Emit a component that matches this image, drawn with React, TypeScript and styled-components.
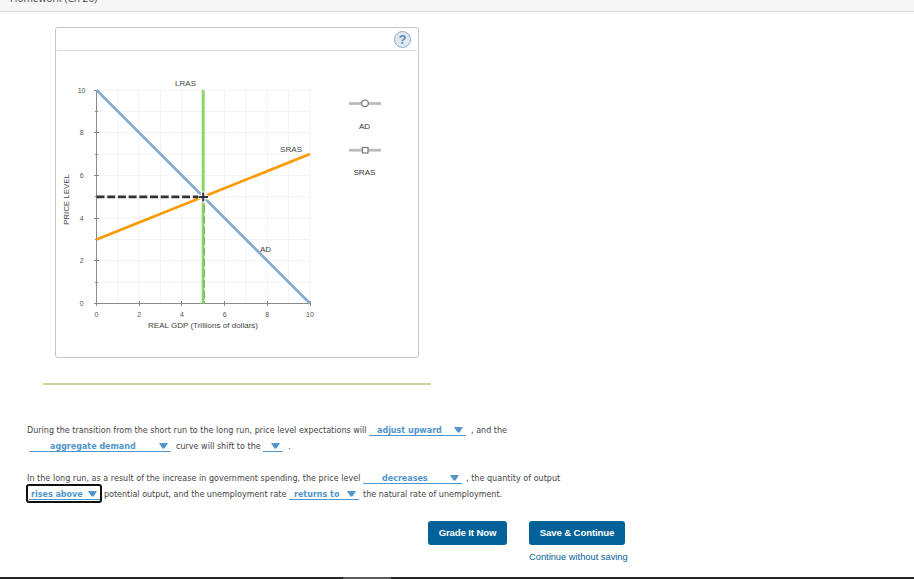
import React from "react";
import styled, { createGlobalStyle } from "styled-components";

const GlobalStyle = createGlobalStyle`
  * { box-sizing: border-box; }
  html, body { margin: 0; padding: 0; background: #fff; overflow: hidden; }
`;

const Page = styled.div`
  display: flex;
  flex-direction: column;
  width: 914px;
  height: 579px;
  overflow: hidden;
  font-family: "Liberation Sans", Arial, sans-serif;
`;

const Header = styled.header`
  display: flex;
  align-items: flex-end;
  flex: none;
  height: 12px;
  padding: 0 0 6px 10px;
  overflow: hidden;
  background: #f6f6f6;
  border-bottom: 1px solid #dcdcdc;
  color: #444;
  font: 10.1px/14px "Open Sans", sans-serif;
  white-space: nowrap;
`;

const Main = styled.main`
  display: flex;
  flex-direction: column;
  align-items: flex-start;
  flex: 1;
  padding-top: 15px;
`;

const GraphCard = styled.section`
  width: 364px;
  height: 331px;
  margin-left: 55px;
  border: 1px solid #c6c6c6;
  border-radius: 3px;
`;

const CardHeader = styled.div`
  display: flex;
  justify-content: flex-end;
  height: 23px;
  margin: 0 1px;
  padding: 3px 6px 0 0;
  border-bottom: 1px solid #dadada;
`;

const HelpButton = styled.button`
  display: flex;
  align-items: center;
  justify-content: center;
  width: 17px;
  height: 17px;
  padding: 0;
  border: 1px solid #8aaccd;
  border-radius: 50%;
  background: #dfe7ef;
  color: #5e8db8;
  font: bold 13px/15px "Liberation Sans", sans-serif;
`;

const CardBody = styled.div`
  display: flex;
`;

const Chart = styled.svg`
  display: block;
  width: 274px;
  height: 300px;
  flex: none;
  font-family: "Liberation Sans", Arial, sans-serif;
`;

const Legend = styled.div`
  display: flex;
  flex-direction: column;
  gap: 13px;
  padding: 48px 0 0 17.5px;
`;

const LegendItem = styled.div`
  display: flex;
  flex-direction: column;
  align-items: center;
  gap: 15px;
  width: 34px;
  height: 34px;
  color: #333;
  font-size: 8.1px;
  line-height: 10px;

  & + & {
    gap: 14px;
  }
`;

const Divider = styled.hr`
  width: 388px;
  height: 2px;
  margin: 25px 0 0 43px;
  border: 0;
  background: #d8cf9f;
`;

const Question = styled.div`
  display: flex;
  flex-direction: column;
  gap: 16px;
  margin: 37px 0 0 27px;
  color: #444;
  font: 8px/16px "DejaVu Sans", Verdana, sans-serif;
`;

const Line = styled.div`
  display: flex;
  height: 16px;
  white-space: pre;
`;

const Phrase = styled.span<{ $w: number; $ls?: number }>`
  width: ${(p) => p.$w}px;
  flex: none;
  line-height: 18px;
  letter-spacing: ${(p) => p.$ls ?? 0}px;
`;

const Select = styled.span<{ $w: number; $pad: number }>`
  display: flex;
  width: ${(p) => p.$w}px;
  height: 13px;
  flex: none;
  margin-top: 1px;
  padding: 0 3px 0 ${(p) => p.$pad}px;
  border-bottom: 1px solid #5195cb;
  color: #5195cb;
  font-weight: bold;
  line-height: 16px;
  svg { flex: none; margin: 4px 0 0 auto; }
`;

const FocusRing = styled.span`
  flex: none;
  width: 76px;
  height: 19px;
  margin: -2px 2px 0 -1px;
  padding: 1px 0 0 1px;
  border: 2px solid #101010;
  border-radius: 3px;
  > span { margin-top: 0; }
`;

const Actions = styled.div`
  display: flex;
  align-items: flex-start;
  gap: 22px;
  margin: 19px 0 0 428px;
`;

const ActionColumn = styled.div`
  display: flex;
  flex-direction: column;
  gap: 6px;
`;

const Button = styled.button<{ $w: number }>`
  width: ${(p) => p.$w}px;
  height: 24px;
  padding: 0;
  border: 0;
  border-radius: 3px;
  background: #006298;
  color: #fff;
  font: bold 9.6px/24px "Liberation Sans", Arial, sans-serif;
  letter-spacing: -0.12px;
  white-space: nowrap;
`;

const SkipLink = styled.a`
  color: #006298;
  font-size: 9.3px;
  line-height: 12px;
  white-space: nowrap;
`;

const BottomBar = styled.footer`
  flex: none;
  height: 2px;
  padding-left: 343px;
  background: #27272a;
`;

const BottomTab = styled.div`
  width: 48px;
  height: 2px;
  background: #5a5a5c;
`;

// Plot coordinates: one unit of either axis is 21.35px.
const UNIT = 21.35;
const px = (v: number) => 40.5 + v * UNIT;
const py = (v: number) => 252.5 - v * UNIT;
const steps = Array.from({ length: 11 }, (_, i) => i);

const Arrow = () => (
  <svg width="9" height="6" viewBox="0 0 9 6"><path d="M0 0H9L5.5 5.5H3.5Z" fill="#5195cb" /></svg>
);

function Graph() {
  return (
    <Chart viewBox="0 0 274 300">
      <g stroke="#f3f3f3" strokeWidth="1">
        {steps.map((i) => <line key={"v" + i} x1={px(i)} x2={px(i)} y1={py(10)} y2={py(0)} />)}
        {steps.map((i) => <line key={"h" + i} x1={px(0)} x2={px(10)} y1={py(i)} y2={py(i)} />)}
      </g>
      <g stroke="#8a8a8a" strokeWidth="1">
        <path d={`M${px(0)} ${py(10)}V${py(0)}H${px(10)}`} fill="none" />
        {steps.map((i) => {
          const r = i % 2 ? 1.5 : 2.5;
          const y = Math.round(py(i) - 0.5) + 0.5;
          return <line key={i} x1={px(0) - r} x2={px(0) + r} y1={y} y2={y} />;
        })}
        {steps.filter((i) => i % 2 === 0).map((i) => {
          const x = Math.round(px(i) - 0.5) + 0.5;
          return <line key={i} x1={x} x2={x} y1={py(0) - 2.5} y2={py(0) + 2.5} />;
        })}
      </g>
      <g fill="#555" fontSize="7">
        {steps.filter((i) => i % 2 === 0).map((i) => (
          <React.Fragment key={i}>
            <text x={i === 10 ? 29.5 : 27.7} y={py(i) + 2.5} textAnchor="end">{i}</text>
            <text x={px(i)} y="266" textAnchor="middle">{i}</text>
          </React.Fragment>
        ))}
      </g>
      <line x1={px(0)} y1={py(10)} x2={px(10)} y2={py(0)} stroke="#84acd2" strokeWidth="2.7" />
      <line x1={px(0)} y1={py(3)} x2={px(10)} y2={py(7)} stroke="#ff9900" strokeWidth="2.7" />
      <line x1="147.2" y1={py(10)} x2="147.2" y2={py(0)} stroke="#8bd665" strokeWidth="3" />
      <line x1="148.5" y1="154" x2="148.5" y2="252" stroke="#c5e9af" strokeWidth="1" />
      <line x1="148.3" y1="154" x2="148.3" y2="252" stroke="#7fb86a" strokeWidth="1.4" strokeDasharray="7.8 2.9" />
      <line x1={px(0)} y1={py(5) + 0.1} x2="143" y2={py(5) + 0.1} stroke="#333" strokeWidth="2.6" strokeDasharray="8 2.7" />
      <path d="M142 146H152M147.2 140.5V151.5" stroke="#fff" strokeWidth="4.5" />
      <path d="M142.5 146H152M147.2 141.5V150.5" stroke="#333" strokeWidth="2" />
      <g fill="#444" fontSize="8">
        <text x="119" y="35" textLength="21">LRAS</text>
        <text x="224" y="101" textLength="22">SRAS</text>
        <text x="204" y="201" textLength="11">AD</text>
        <text x="92" y="277" textLength="110">REAL GDP (Trillions of dollars)</text>
        <text transform="translate(13.2 174) rotate(-90)" textLength="51">PRICE LEVEL</text>
      </g>
    </Chart>
  );
}

export default function App() {
  return (
    <Page>
      <GlobalStyle />
      <Header>Homework (Ch 20)</Header>
      <Main>
        <GraphCard>
          <CardHeader><HelpButton aria-label="Help">?</HelpButton></CardHeader>
          <CardBody>
            <Graph />
            <Legend>
              <LegendItem>
                <svg width="34" height="8"><path d="M1 4.5H33" stroke="#bbb" strokeWidth="2.8" /><circle cx="17" cy="4.3" r="3.3" fill="#fff" stroke="#777" strokeWidth="1.2" /></svg>
                <span>AD</span>
              </LegendItem>
              <LegendItem>
                <svg width="34" height="8"><path d="M1 4.2H33" stroke="#bbb" strokeWidth="2.8" /><rect x="14.5" y="1.5" width="5.5" height="5.5" fill="#fff" stroke="#777" strokeWidth="1.2" /></svg>
                <span>SRAS</span>
              </LegendItem>
            </Legend>
          </CardBody>
        </GraphCard>
        <Divider />
        <Question>
          <div>
            <Line>
              <Phrase $w={342} $ls={0.024}>During the transition from the short run to the long run, price level expectations will</Phrase>
              <Select $w={97} $pad={8}>adjust upward<Arrow /></Select>
              <Phrase $w={50}>{"  , and the"}</Phrase>
            </Line>
            <Line>
              <Phrase $w={2} />
              <Select $w={142} $pad={21}>aggregate demand<Arrow /></Select>
              <Phrase $w={5} />
              <Phrase $w={87} $ls={0.02}>curve will shift to the</Phrase>
              <Select $w={20} $pad={2}><Arrow /></Select>
              <Phrase $w={10}>{"  ."}</Phrase>
            </Line>
          </div>
          <div>
            <Line>
              <Phrase $w={336} $ls={0.035}>In the long run, as a result of the increase in government spending, the price level</Phrase>
              <Select $w={99} $pad={19}>decreases<Arrow /></Select>
              <Phrase $w={4} />
              <Phrase $w={100} $ls={0.04}>, the quantity of output</Phrase>
            </Line>
            <Line>
              <FocusRing><Select $w={71} $pad={2}>rises above<Arrow /></Select></FocusRing>
              <Phrase $w={185}>potential output, and the unemployment rate</Phrase>
              <Select $w={70} $pad={5}>returns to<Arrow /></Select>
              <Phrase $w={4} />
              <Phrase $w={150}>the natural rate of unemployment.</Phrase>
            </Line>
          </div>
        </Question>
        <Actions>
          <Button $w={79}>Grade It Now</Button>
          <ActionColumn>
            <Button $w={96}>Save &amp; Continue</Button>
            <SkipLink>Continue without saving</SkipLink>
          </ActionColumn>
        </Actions>
      </Main>
      <BottomBar><BottomTab /></BottomBar>
    </Page>
  );
}
